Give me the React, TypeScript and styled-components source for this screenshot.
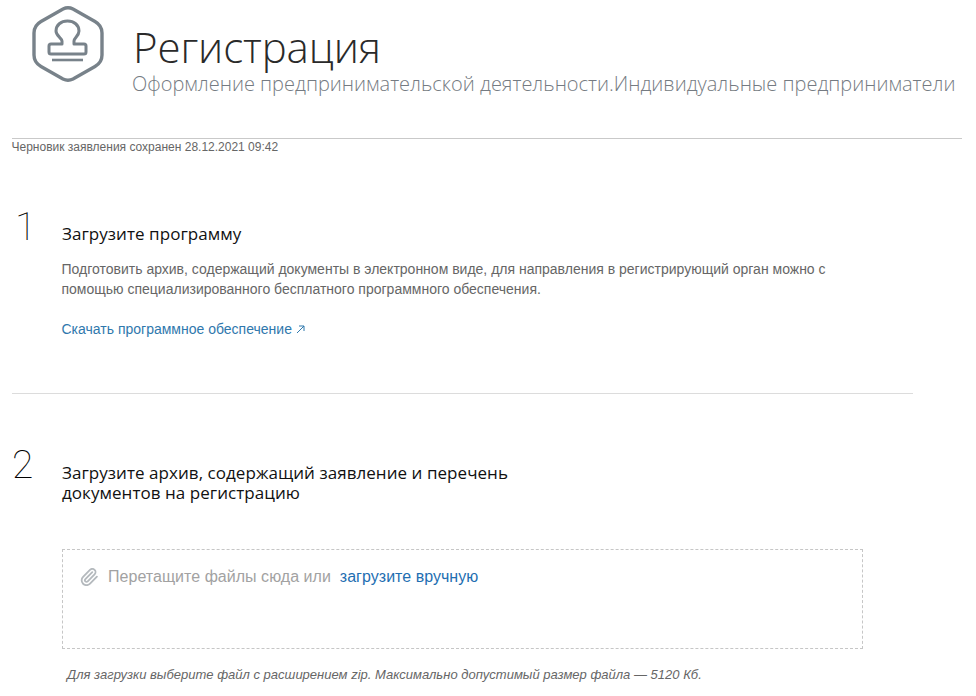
import React from "react";
import styled, { createGlobalStyle } from "styled-components";

const Global = createGlobalStyle`
  html, body { margin: 0; padding: 0; background: #fff; overflow: hidden; }
  body { font-family: "Liberation Sans", Arial, sans-serif; }
`;

const Page = styled.div`
  width: 976px;
  height: 696px;
  padding: 0 14px 0 12px;
  box-sizing: border-box;
  overflow: hidden;
`;

const Header = styled.header`
  display: flex;
  align-items: flex-start;
  height: 139px;
  padding: 6px 0 0 20px;
  box-sizing: border-box;
  border-bottom: 1px solid #c9c9c9;
`;

const Logo = styled.svg`
  width: 72px;
  height: 76px;
  flex: none;
  color: #78828a;
`;

const HeaderText = styled.div`
  margin-left: 29px;
  padding-top: 14px;
  white-space: nowrap;
  font-family: "Open Sans", sans-serif;
  font-weight: 300;
`;

const Title = styled.h1`
  margin: 0;
  font-size: 42px;
  line-height: 54px;
  font-weight: 300;
  letter-spacing: -0.1px;
  color: #2a2a2a;
`;

const Subtitle = styled.div`
  margin-top: -2px;
  margin-left: -1px;
  font-size: 20px;
  line-height: 24px;
  color: #757b82;
`;

const Draft = styled.div`
  font-size: 12px;
  line-height: 14px;
  color: #666;
  margin: 1px 0 0 -0.5px;
`;

const Step = styled.section<{ $top: number }>`
  display: flex;
  margin-top: ${(p) => p.$top}px;
`;

const StepNum = styled.div<{ $indent: number }>`
  width: 50px;
  flex: none;
  box-sizing: border-box;
  padding-left: ${(p) => p.$indent}px;
  font-family: Roboto, sans-serif;
  font-weight: 100;
  font-size: 39px;
  line-height: 40px;
  color: #000;
`;

const StepBody = styled.div<{ $pad: number }>`
  flex: 1;
  padding-top: ${(p) => p.$pad}px;
`;

const StepTitle = styled.h2`
  margin: 0;
  font-family: "Open Sans", sans-serif;
  font-weight: 400;
  font-size: 17px;
  line-height: 20px;
  letter-spacing: 0.05px;
  color: #111;
`;

const Para = styled.p`
  margin: 15px 0 0 -0.5px;
  width: 790px;
  font-size: 14px;
  line-height: 20px;
  color: #666;
`;

const Link = styled.a`
  display: block;
  margin: 20px 0 0 -0.5px;
  font-size: 14px;
  line-height: 20px;
  color: #2f78ad;
  text-decoration: none;
`;

const LinkArrow = styled.svg`
  width: 9px;
  height: 9px;
  margin-left: 4px;
  color: #2f78ad;
`;

const Divider = styled.hr`
  margin: 54px 0 0;
  width: 901px;
  height: 1px;
  border: 0;
  background: #dcdcdc;
`;

const DropZone = styled.div`
  display: flex;
  align-items: flex-start;
  gap: 10px;
  width: 801px;
  height: 100px;
  margin-top: 46px;
  padding: 18px 17px;
  box-sizing: border-box;
  border: 1px dashed #c6c6c6;
`;

const Clip = styled.svg`
  width: 18px;
  height: 18px;
  flex: none;
  color: #b4b9bd;
`;

const DropText = styled.span`
  font-size: 16px;
  line-height: 18px;
  letter-spacing: 0.03px;
  color: #a2a2a2;
  white-space: pre;
`;

const DropLink = styled.a`
  color: #1f6fb2;
  text-decoration: none;
`;

const Hint = styled.div`
  margin: 19px 0 0 5px;
  font-size: 13px;
  line-height: 14px;
  letter-spacing: 0.01px;
  font-style: italic;
  color: #666;
`;

export default function App() {
  return (
    <Page>
      <Global />
      <Header>
        <Logo viewBox="0 0 72 76" fill="none" stroke="currentColor">
          <path
            strokeWidth="3.4"
            d="M31 3 Q36 0.5 41 3 L63 15.5 Q70 19.5 70 27 V49 Q70 56.5 63 60.5 L41 73 Q36 75.5 31 73 L9 60.5 Q2 56.5 2 49 V27 Q2 19.5 9 15.5 Z"
          />
          <path
            strokeWidth="3"
            strokeLinejoin="round"
            d="M30 38 V35 C30 32 24 30 24 25 C24 19 29 15 35.5 15 C42 15 47 19 47 25 C47 30 42 32 42 35 V38 H52 Q54 38 54 40 V46 Q54 48 52 48 H19 Q17 48 17 46 V40 Q17 38 19 38 Z"
          />
          <path strokeWidth="2.6" d="M20 54 H51" />
        </Logo>
        <HeaderText>
          <Title>Регистрация</Title>
          <Subtitle>Оформление предпринимательской деятельности.Индивидуальные предприниматели</Subtitle>
        </HeaderText>
      </Header>
      <Draft>Черновик заявления сохранен 28.12.2021 09:42</Draft>

      <Step $top={53}>
        <StepNum $indent={3}>1</StepNum>
        <StepBody $pad={17}>
          <StepTitle>Загрузите программу</StepTitle>
          <Para>
            Подготовить архив, содержащий документы в электронном виде, для направления в регистрирующий орган можно с
            помощью специализированного бесплатного программного обеспечения.
          </Para>
          <Link href="#">
            Скачать программное обеспечение
            <LinkArrow viewBox="0 0 9 9" fill="none" stroke="currentColor" strokeWidth="1">
              <path d="M1 8 L8 1 M3 1 H8 V6" />
            </LinkArrow>
          </Link>
        </StepBody>
      </Step>
      <Divider />

      <Step $top={51}>
        <StepNum $indent={0}>2</StepNum>
        <StepBody $pad={18}>
          <StepTitle>
            Загрузите архив, содержащий заявление и перечень
            <br />
            документов на регистрацию
          </StepTitle>
          <DropZone>
            <Clip viewBox="1 1 22 22" fill="none" stroke="currentColor" strokeWidth="2.2" strokeLinecap="round">
              <path d="m16 6-8.414 8.586a2 2 0 0 0 2.829 2.829l8.414-8.586a4 4 0 1 0-5.657-5.657l-8.379 8.551a6 6 0 1 0 8.485 8.485l8.379-8.551" />
            </Clip>
            <DropText>
              Перетащите файлы сюда или  <DropLink href="#">загрузите вручную</DropLink>
            </DropText>
          </DropZone>
          <Hint>Для загрузки выберите файл с расширением zip. Максимально допустимый размер файла — 5120 Кб.</Hint>
        </StepBody>
      </Step>
    </Page>
  );
}
